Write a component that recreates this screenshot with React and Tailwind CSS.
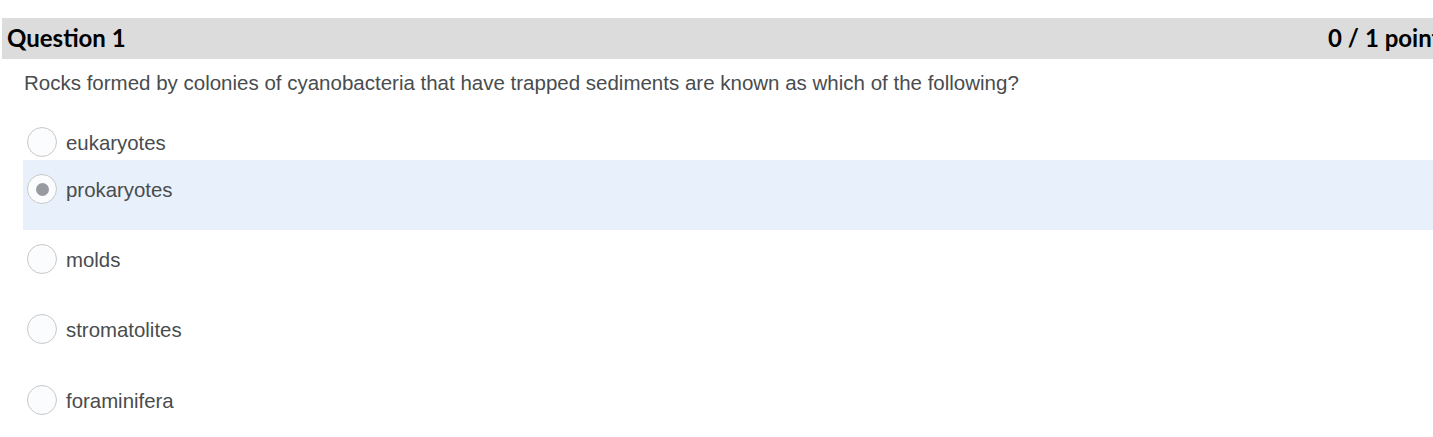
import React from "react";

const options = [
  { label: "eukaryotes", h: "h-[65px]", pt: "pt-[32px]", selected: false },
  { label: "prokaryotes", h: "h-[70px]", pt: "pt-[14px]", selected: true },
  { label: "molds", h: "h-[70px]", pt: "pt-[14px]", selected: false },
  { label: "stromatolites", h: "h-[71px]", pt: "pt-[14px]", selected: false },
  { label: "foraminifera", h: "h-[71px]", pt: "pt-[14px]", selected: false },
];

function Radio({ selected }) {
  return (
    <div className="w-[30px] h-[30px] rounded-full border border-[#c8c8c8] bg-[#fbfcfe] flex items-center justify-center shrink-0">
      {selected && <div className="w-[13px] h-[13px] rounded-full bg-[#979ba0]" />}
    </div>
  );
}

export default function App() {
  return (
    <div className="w-full overflow-hidden bg-white h-[437px]">
      <div className="w-[1457px] pt-[18px]">
        <div className="ml-[2px] h-[41px] bg-[#dcdcdc] flex items-center justify-between pl-[5px] pr-[6px] pb-[2px] font-['Lato',sans-serif] font-bold text-[24px] text-[#000]">
          <span>Question 1</span>
          <span>0 / 1 points</span>
        </div>
        <div className="pl-[24px] pt-[12px] font-['Liberation_Sans',Arial,sans-serif] text-[20.5px] text-[#494c4e] leading-[24px]">
          Rocks formed by colonies of cyanobacteria that have trapped sediments are known as which of the following?
        </div>
        <div className="pl-[23px]">
          {options.map((o) => (
            <div
              key={o.label}
              className={`${o.h} ${o.pt} flex items-start pl-[4px] ${o.selected ? "bg-[#e8f1fb]" : ""}`}
            >
              <div className="flex items-center gap-[9px]">
                <Radio selected={o.selected} />
                <span className="font-['Liberation_Sans',Arial,sans-serif] text-[20.4px] text-[#494c4e] leading-[24px] pt-[2px]">
                  {o.label}
                </span>
              </div>
            </div>
          ))}
        </div>
      </div>
    </div>
  );
}
